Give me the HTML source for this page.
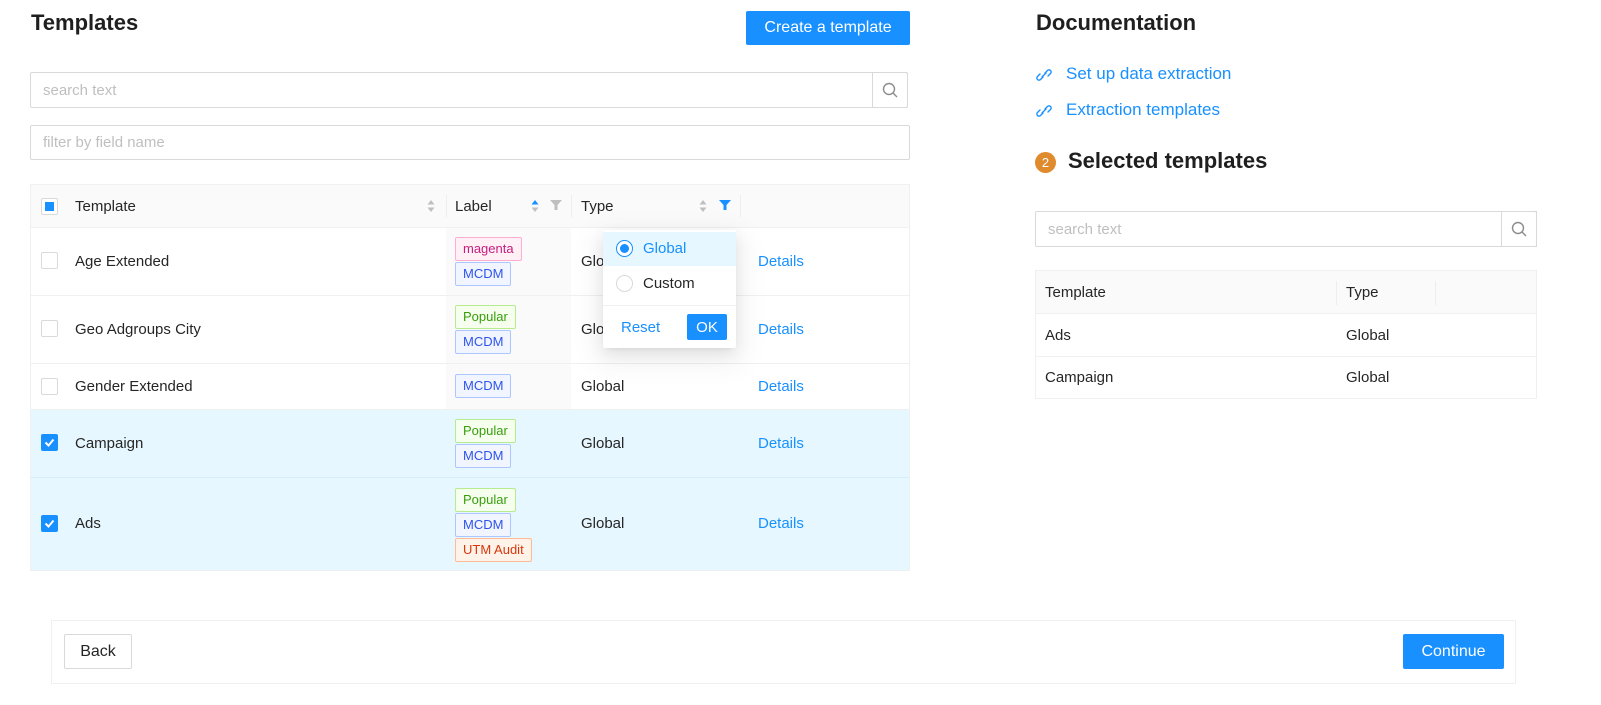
<!DOCTYPE html>
<html><head><meta charset="utf-8">
<style>
*{box-sizing:border-box;margin:0;padding:0}
body{width:1601px;height:705px;background:#fff;font-family:"Liberation Sans",sans-serif;font-size:15px;color:#262626;position:relative;overflow:hidden}
.a{position:absolute}
.h{font-size:22px;font-weight:bold;color:#1f1f1f}
.btnp{background:#1890ff;color:#fff;border-radius:2px;display:flex;align-items:center;justify-content:center;font-size:16px}
.inp{border:1px solid #d9d9d9;border-radius:2px;color:#bfbfbf;font-size:15px;padding-left:12px;display:flex;align-items:center}
.row{position:absolute;left:30px;width:880px;border-bottom:1px solid #f0f0f0;border-left:1px solid #f0f0f0;border-right:1px solid #f0f0f0}
.cb{position:absolute;left:10px;width:17px;height:17px;border:1px solid #d9d9d9;border-radius:2px;background:#fff}
.cb.on{background:#1890ff;border-color:#1890ff}
.tag{position:absolute;left:424px;height:24px;font-size:13px;padding:0 7px;border:1px solid;border-radius:2px;line-height:22px;white-space:nowrap}
.mag{color:#c41d7f;background:#fff0f6;border-color:#ffadd2}
.pop{color:#389e0d;background:#f6ffed;border-color:#b7eb8f}
.mc{color:#2f54eb;background:#f0f5ff;border-color:#adc6ff}
.utm{color:#d4380d;background:#fff2e8;border-color:#ffbb96}
.t{position:absolute;left:44px}
.ty{position:absolute;left:550px}
.dt{position:absolute;left:727px;color:#1890ff}
.lnk{color:#1890ff;font-size:17px}
</style></head><body>
<div class="a h" style="left:31px;top:10px">Templates</div>
<div class="a btnp" style="left:746px;top:11px;width:164px;height:34px">Create a template</div>
<div class="a inp" style="left:30px;top:72px;width:878px;height:36px">search text</div>
<div class="a" style="left:872px;top:72px;width:36px;height:36px;border:1px solid #d9d9d9;border-radius:0 2px 2px 0">
<svg width="34" height="34" viewBox="0 0 34 34"><circle cx="16" cy="16" r="5.5" fill="none" stroke="#8c8c8c" stroke-width="1.4"/><path d="M20 20l4 4" stroke="#8c8c8c" stroke-width="1.4"/></svg></div>
<div class="a inp" style="left:30px;top:125px;width:880px;height:35px">filter by field name</div>

<div class="a" style="left:30px;top:184px;width:880px;height:44px;background:#fafafa;border:1px solid #f0f0f0">
<div class="cb" style="top:13px"><div style="position:absolute;left:3px;top:3px;width:9px;height:9px;background:#1890ff"></div></div>
<div class="a" style="left:44px;top:13px">Template</div>
<svg class="a" style="left:395px;top:13px" width="10" height="16"><path d="M5 2l3.5 4.5h-7z M5 14l3.5-4.5h-7z" fill="#bfbfbf"/></svg>
<div class="a" style="left:415px;top:10px;width:1px;height:22px;background:#eee"></div>
<div class="a" style="left:424px;top:13px">Label</div>
<svg class="a" style="left:499px;top:13px" width="10" height="16"><path d="M5 2l3.5 4.5h-7z" fill="#1890ff"/><path d="M5 14l3.5-4.5h-7z" fill="#bfbfbf"/></svg>
<svg class="a" style="left:519px;top:14px" width="12" height="12"><path d="M0 1h12l-4.5 5v5h-3v-5z" fill="#bfbfbf"/></svg>
<div class="a" style="left:540px;top:10px;width:1px;height:22px;background:#eee"></div>
<div class="a" style="left:550px;top:13px">Type</div>
<svg class="a" style="left:667px;top:13px" width="10" height="16"><path d="M5 2l3.5 4.5h-7z M5 14l3.5-4.5h-7z" fill="#bfbfbf"/></svg>
<svg class="a" style="left:688px;top:14px" width="12" height="12"><path d="M0 1h12l-4.5 5v5h-3v-5z" fill="#1890ff"/></svg>
<div class="a" style="left:709px;top:10px;width:1px;height:22px;background:#eee"></div>
</div>

<div class="row" style="top:228px;height:68px"><div class="a" style="left:415px;top:0;width:125px;height:67px;background:#fafafa"></div>
<div class="cb" style="top:24px"></div><div class="t" style="top:25px">Age Extended</div>
<div class="tag mag" style="top:9px">magenta</div><div class="tag mc" style="top:34px">MCDM</div>
<div class="ty" style="top:25px">Global</div><div class="dt" style="top:25px">Details</div></div>

<div class="row" style="top:296px;height:68px"><div class="a" style="left:415px;top:0;width:125px;height:67px;background:#fafafa"></div>
<div class="cb" style="top:24px"></div><div class="t" style="top:25px">Geo Adgroups City</div>
<div class="tag pop" style="top:9px">Popular</div><div class="tag mc" style="top:34px">MCDM</div>
<div class="ty" style="top:25px">Global</div><div class="dt" style="top:25px">Details</div></div>

<div class="row" style="top:364px;height:46px"><div class="a" style="left:415px;top:0;width:125px;height:45px;background:#fafafa"></div>
<div class="cb" style="top:14px"></div><div class="t" style="top:14px">Gender Extended</div>
<div class="tag mc" style="top:10px">MCDM</div>
<div class="ty" style="top:14px">Global</div><div class="dt" style="top:14px">Details</div></div>

<div class="row" style="top:410px;height:68px;background:#e6f7ff;border-bottom-color:#d6eef9">
<div class="cb on" style="top:24px"><svg width="15" height="15"><path d="M3.5 7.5l3 3 5-6" fill="none" stroke="#fff" stroke-width="2"/></svg></div><div class="t" style="top:25px">Campaign</div>
<div class="tag pop" style="top:9px">Popular</div><div class="tag mc" style="top:34px">MCDM</div>
<div class="ty" style="top:25px">Global</div><div class="dt" style="top:25px">Details</div></div>

<div class="row" style="top:478px;height:93px;background:#e6f7ff">
<div class="cb on" style="top:37px"><svg width="15" height="15"><path d="M3.5 7.5l3 3 5-6" fill="none" stroke="#fff" stroke-width="2"/></svg></div><div class="t" style="top:37px">Ads</div>
<div class="tag pop" style="top:10px">Popular</div><div class="tag mc" style="top:35px">MCDM</div><div class="tag utm" style="top:60px">UTM Audit</div>
<div class="ty" style="top:37px">Global</div><div class="dt" style="top:37px">Details</div></div>

<div class="a" style="left:603px;top:230px;width:133px;height:118px;background:#fff;box-shadow:0 3px 6px -4px rgba(0,0,0,.12),0 6px 16px rgba(0,0,0,.08),0 9px 28px 8px rgba(0,0,0,.05);border-radius:2px">
<div class="a" style="left:0;top:2px;width:133px;height:34px;background:#e6f7ff"></div>
<div class="a" style="left:13px;top:10px;width:17px;height:17px;border:1px solid #1890ff;border-radius:50%;background:#fff"><div style="margin:3px;width:9px;height:9px;border-radius:50%;background:#1890ff"></div></div>
<div class="a" style="left:40px;top:10px;color:#1890ff">Global</div>
<div class="a" style="left:13px;top:45px;width:17px;height:17px;border:1px solid #d9d9d9;border-radius:50%"></div>
<div class="a" style="left:40px;top:45px">Custom</div>
<div class="a" style="left:0;top:75px;width:133px;height:1px;background:#f0f0f0"></div>
<div class="a" style="left:18px;top:89px;color:#1890ff;font-size:15px">Reset</div>
<div class="a btnp" style="left:84px;top:84px;width:40px;height:26px;font-size:15px">OK</div>
</div>

<div class="a h" style="left:1036px;top:10px">Documentation</div>
<svg class="a" style="left:1035px;top:66px" width="18" height="18" viewBox="0 0 18 18"><path d="M8 11l-2.5 2.5a2.1 2.1 0 0 1-3-3L5 8M10 7l2.5-2.5a2.1 2.1 0 0 1 3 3L13 10M7 11l4-4" fill="none" stroke="#1890ff" stroke-width="1.4" stroke-linecap="round"/></svg>
<div class="a lnk" style="left:1066px;top:64px">Set up data extraction</div>
<svg class="a" style="left:1035px;top:102px" width="18" height="18" viewBox="0 0 18 18"><path d="M8 11l-2.5 2.5a2.1 2.1 0 0 1-3-3L5 8M10 7l2.5-2.5a2.1 2.1 0 0 1 3 3L13 10M7 11l4-4" fill="none" stroke="#1890ff" stroke-width="1.4" stroke-linecap="round"/></svg>
<div class="a lnk" style="left:1066px;top:100px">Extraction templates</div>
<div class="a" style="left:1035px;top:152px;width:21px;height:21px;border-radius:50%;background:#e08a2e;color:#fff;font-size:13px;text-align:center;line-height:21px">2</div>
<div class="a h" style="left:1068px;top:148px">Selected templates</div>
<div class="a inp" style="left:1035px;top:211px;width:502px;height:36px">search text</div>
<div class="a" style="left:1501px;top:211px;width:36px;height:36px;border:1px solid #d9d9d9">
<svg width="34" height="34" viewBox="0 0 34 34"><circle cx="16" cy="16" r="5.5" fill="none" stroke="#8c8c8c" stroke-width="1.4"/><path d="M20 20l4 4" stroke="#8c8c8c" stroke-width="1.4"/></svg></div>
<div class="a" style="left:1035px;top:270px;width:502px;height:129px;border:1px solid #f0f0f0">
<div class="a" style="left:0;top:0;width:500px;height:43px;background:#fafafa;border-bottom:1px solid #f0f0f0"></div>
<div class="a" style="left:9px;top:13px">Template</div>
<div class="a" style="left:300px;top:10px;width:1px;height:24px;background:#eee"></div>
<div class="a" style="left:310px;top:13px">Type</div>
<div class="a" style="left:399px;top:10px;width:1px;height:24px;background:#eee"></div>
<div class="a" style="left:9px;top:56px">Ads</div><div class="a" style="left:310px;top:56px">Global</div>
<div class="a" style="left:0;top:85px;width:500px;height:1px;background:#f0f0f0"></div>
<div class="a" style="left:9px;top:98px">Campaign</div><div class="a" style="left:310px;top:98px">Global</div>
</div>

<div class="a" style="left:51px;top:620px;width:1465px;height:64px;border:1px solid #f0f0f0"></div>
<div class="a" style="left:64px;top:634px;width:68px;height:35px;border:1px solid #d9d9d9;border-radius:2px;display:flex;align-items:center;justify-content:center;font-size:16px">Back</div>
<div class="a btnp" style="left:1403px;top:634px;width:101px;height:35px">Continue</div>
</body></html>
